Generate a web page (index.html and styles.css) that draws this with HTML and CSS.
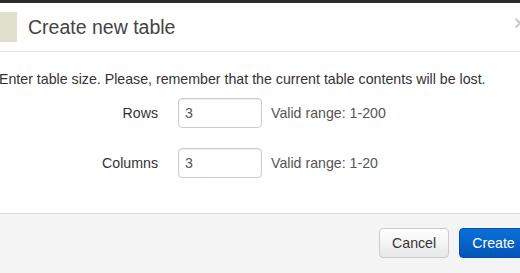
FILE: index.html
```html
<!DOCTYPE html>
<html>
<head>
<meta charset="utf-8">
<link rel="stylesheet" href="styles.css">
</head>
<body>
<div class="topbar"></div>
<div class="modal">
  <div class="modal-header">
    <div class="logo"></div>
    <h3 class="title">Create new table</h3>
    <span class="close">×</span>
  </div>
  <div class="modal-body">
    <p class="intro">Enter table size. Please, remember that the current table contents will be lost.</p>
    <div class="form">
      <label class="label">Rows</label>
      <input class="field" type="text" value="3">
      <span class="help">Valid range: 1-200</span>
      <label class="label">Columns</label>
      <input class="field" type="text" value="3">
      <span class="help">Valid range: 1-20</span>
    </div>
  </div>
  <div class="modal-footer">
    <button class="btn">Cancel</button>
    <button class="btn btn-primary">Create</button>
  </div>
</div>
</body>
</html>
```
FILE: styles.css
```css
html, body {
  margin: 0;
  padding: 0;
  background: #fff;
  overflow: hidden;
}
body {
  width: 520px;
  height: 273px;
  font-family: "Liberation Sans", Arial, sans-serif;
  font-size: 14.2px;
  color: #333;
}
.topbar {
  height: 3px;
  background: #2b2b2b;
}
.modal {
  display: flex;
  flex-direction: column;
  height: 270px;
}
.modal-header {
  height: 48px;
  display: flex;
  align-items: center;
  border-bottom: 1px solid #e5e5e5;
  position: relative;
}
.logo {
  width: 17px;
  height: 30px;
  background: #dfe0cb;
}
.title {
  margin: 0 0 0 11px;
  font-size: 19.5px;
  font-weight: normal;
  color: #444;
  line-height: 24px;
}
.close {
  position: absolute;
  left: 514px;
  top: 10px;
  font-size: 20px;
  font-weight: bold;
  color: #000;
  opacity: 0.2;
  line-height: 20px;
}
.modal-body {
  height: 161px;
}
.intro {
  margin: 17px 0 0 -1px;
  line-height: 20px;
  white-space: nowrap;
}
.form {
  display: grid;
  grid-template-columns: 178px 84px auto;
  row-gap: 20px;
  align-items: center;
  margin-top: 9px;
}
.label {
  box-sizing: border-box;
  text-align: right;
  padding-right: 20px;
}
.field {
  box-sizing: border-box;
  width: 84px;
  height: 30px;
  border: 1px solid #ccc;
  border-radius: 4px;
  padding: 0 6px;
  font-family: inherit;
  font-size: 14.2px;
  color: #555;
  box-shadow: inset 0 1px 1px rgba(0,0,0,0.075);
}
.help {
  margin-left: 9px;
  color: #555;
}
.modal-footer {
  flex: 1;
  background: #f4f4f4;
  border-top: 1px solid #ddd;
  display: flex;
  align-items: flex-start;
  padding: 14px 0 0 379px;
  gap: 10px;
}
.btn {
  box-sizing: border-box;
  height: 30px;
  padding: 0 12px;
  font-family: inherit;
  font-size: 14.2px;
  color: #333;
  border: 1px solid #ccc;
  border-radius: 4px;
  background: linear-gradient(#ffffff, #e8e8e8);
  flex: none;
}
.btn-primary {
  color: #fff;
  border-color: #0450a8;
  background: linear-gradient(#0a70d6, #0355b8);
  padding-right: 20px;
}
```
